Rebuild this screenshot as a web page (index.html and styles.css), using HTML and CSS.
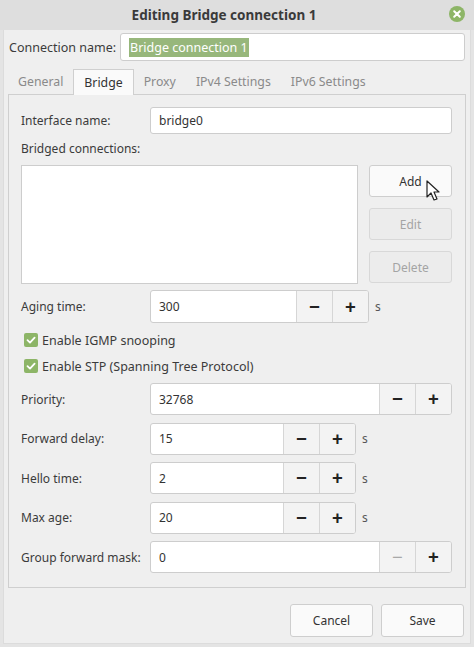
FILE: index.html
```html
<!DOCTYPE html>
<html>
<head>
<meta charset="utf-8">
<link rel="stylesheet" href="styles.css">
</head>
<body>
<div class="window">
  <div class="titlebar">
    <div class="title">Editing Bridge connection 1</div>
    <div class="close">
      <svg width="16" height="16" viewBox="0 0 16 16"><circle cx="8" cy="8" r="8" fill="#8db567"/><path d="M5.2 5.2 L10.8 10.8 M10.8 5.2 L5.2 10.8" stroke="#fff" stroke-width="2" stroke-linecap="round"/></svg>
    </div>
  </div>
  <div class="content">
    <div class="conn-row">
      <span class="conn-label">Connection name:</span>
      <div class="entry conn-entry"><span class="sel">Bridge connection 1</span></div>
    </div>
    <div class="tabs">
      <div class="tab">General</div>
      <div class="tab active">Bridge</div>
      <div class="tab">Proxy</div>
      <div class="tab">IPv4 Settings</div>
      <div class="tab">IPv6 Settings</div>
    </div>
    <div class="panel">
      <div class="row">
        <span class="label">Interface name:</span>
        <div class="entry wide">bridge0</div>
      </div>
      <div class="section-label">Bridged connections:</div>
      <div class="bridged">
        <div class="listbox"></div>
        <div class="side-buttons">
          <div class="btn add">Add
            <svg class="cursor" width="16" height="22" viewBox="0 0 16 22"><path d="M1 1 L1 17 L5 13 L8 20 L11 19 L8 12 L13 12 Z" fill="#fff" stroke="#222" stroke-width="1.2" stroke-linejoin="round"/></svg>
          </div>
          <div class="btn disabled">Edit</div>
          <div class="btn disabled">Delete</div>
        </div>
      </div>
      <div class="row spin-row aging">
        <span class="label">Aging time:</span>
        <div class="spin w218"><div class="spin-val">300</div><div class="sb">&#8722;</div><div class="sb">+</div></div>
        <span class="unit">s</span>
      </div>
      <div class="check-row first-check"><span class="check"><svg width="14" height="14" viewBox="0 0 14 14"><rect width="14" height="14" rx="2" fill="#8db567"/><path d="M3.5 7.2 L6 9.6 L10.6 4.6" fill="none" stroke="#fff" stroke-width="1.8" stroke-linecap="round" stroke-linejoin="round"/></svg></span>Enable IGMP snooping</div>
      <div class="check-row"><span class="check"><svg width="14" height="14" viewBox="0 0 14 14"><rect width="14" height="14" rx="2" fill="#8db567"/><path d="M3.5 7.2 L6 9.6 L10.6 4.6" fill="none" stroke="#fff" stroke-width="1.8" stroke-linecap="round" stroke-linejoin="round"/></svg></span>Enable STP (Spanning Tree Protocol)</div>
      <div class="row spin-row first">
        <span class="label">Priority:</span>
        <div class="spin full"><div class="spin-val">32768</div><div class="sb">&#8722;</div><div class="sb">+</div></div>
      </div>
      <div class="row spin-row">
        <span class="label">Forward delay:</span>
        <div class="spin w205"><div class="spin-val">15</div><div class="sb">&#8722;</div><div class="sb">+</div></div>
        <span class="unit">s</span>
      </div>
      <div class="row spin-row">
        <span class="label">Hello time:</span>
        <div class="spin w205"><div class="spin-val">2</div><div class="sb">&#8722;</div><div class="sb">+</div></div>
        <span class="unit">s</span>
      </div>
      <div class="row spin-row">
        <span class="label">Max age:</span>
        <div class="spin w205"><div class="spin-val">20</div><div class="sb">&#8722;</div><div class="sb">+</div></div>
        <span class="unit">s</span>
      </div>
      <div class="row spin-row">
        <span class="label">Group forward mask:</span>
        <div class="spin full"><div class="spin-val">0</div><div class="sb dim">&#8722;</div><div class="sb">+</div></div>
      </div>
    </div>
    <div class="footer">
      <div class="btn fbtn">Cancel</div>
      <div class="btn fbtn">Save</div>
    </div>
  </div>
</div>
</body>
</html>
```
FILE: styles.css
```css
* { box-sizing: border-box; }
html, body { margin: 0; padding: 0; }
body {
  width: 474px;
  height: 647px;
  background: #e4e4e4;
  font-family: "Noto Sans", "DejaVu Sans", sans-serif;
  font-size: 12px;
  color: #3b3b3b;
  overflow: hidden;
}
.window {
  width: 474px;
  height: 647px;
  display: flex;
  flex-direction: column;
}
.titlebar {
  height: 30px;
  display: flex;
  align-items: center;
  position: relative;
  background: #dedede;
}
.title {
  flex: 1;
  text-align: center;
  font-weight: bold;
  font-size: 13.5px;
  color: #3a3a3a;
  padding-right: 26px;
}
.close {
  position: absolute;
  right: 9px;
  top: 6px;
  width: 16px;
  height: 16px;
}
.close svg { display: block; }
.content {
  flex: 1;
  margin: 0 3px 3px 3px;
  background: #efefef;
  border: 1px solid #dcdcdc;
  border-top: none;
  padding: 2px 4px 0 4px;
  display: flex;
  flex-direction: column;
}
.conn-row {
  display: flex;
  align-items: center;
  height: 28px;
  margin-top: 1px;
}
.conn-label {
  width: 112px;
  padding-left: 1px;
  font-size: 12.5px;
}
.entry {
  background: #fff;
  border: 1px solid #cdcdcd;
  border-radius: 3px;
  display: flex;
  align-items: center;
  padding-left: 8px;
  color: #333;
}
.conn-entry {
  flex: 1;
  height: 28px;
  margin-right: 1px;
}
.sel {
  background: #97b77b;
  color: #fff;
  padding: 1px 1px;
  font-size: 12.5px;
}
.tabs {
  display: flex;
  height: 25px;
  margin-top: 8px;
  padding-left: 0;
  align-items: flex-end;
}
.tab {
  height: 25px;
  display: flex;
  align-items: center;
  padding: 0 10px;
  color: #8a8a8a;
  font-size: 12.3px;
}
.tab.active {
  background: #fafafa;
  border: 1px solid #cfcfcf;
  border-bottom: none;
  color: #333;
  height: 26px;
  margin-bottom: -1px;
  position: relative;
  z-index: 1;
  padding: 0 10px;
}
.panel {
  border: 1px solid #cfcfcf;
  background: #efefef;
  padding: 12px 13px 0 12px;
  height: 494px;
  display: flex;
  flex-direction: column;
}
.row {
  display: flex;
  align-items: center;
}
.label {
  width: 129px;
  flex-shrink: 0;
}
.entry.wide {
  flex: 1;
  height: 27px;
}
.section-label {
  margin-top: 7px;
  height: 16px;
  line-height: 16px;
}
.bridged {
  display: flex;
  margin-top: 8px;
  gap: 11px;
}
.listbox {
  width: 337px;
  height: 119px;
  background: #fff;
  border: 1px solid #cdcdcd;
}
.side-buttons {
  flex: 1;
  display: flex;
  flex-direction: column;
  gap: 11px;
}
.btn {
  height: 32px;
  border: 1px solid #cecece;
  border-radius: 3px;
  background: #fafafa;
  display: flex;
  align-items: center;
  justify-content: center;
  color: #333;
  position: relative;
}
.btn.disabled {
  background: #ececec;
  color: #a4a4a4;
  border-color: #d8d8d8;
}
.cursor {
  position: absolute;
  left: 56px;
  top: 14px;
}
.spin-row {
  margin-top: 7.5px;
  height: 32px;
}
.spin-row.aging { margin-top: 6px; height: 33px; }
.spin-row.first { margin-top: 4px; }
.spin {
  display: flex;
  height: 100%;
  border: 1px solid #cdcdcd;
  border-radius: 3px;
  background: #fff;
  overflow: hidden;
}
.spin.w218 { width: 219px; }
.spin.w205 { width: 206px; }
.spin.full { flex: 1; }
.spin-val {
  flex: 1;
  display: flex;
  align-items: center;
  padding-left: 8px;
  color: #333;
}
.sb {
  width: 36px;
  border-left: 1px solid #d6d6d6;
  background: #f3f3f3;
  display: flex;
  align-items: center;
  justify-content: center;
  font-size: 19px;
  font-weight: bold;
  color: #222;
}
.sb.dim { color: #a8a8a8; font-weight: normal; }
.unit {
  margin-left: 6px;
  color: #555;
}
.check-row {
  display: flex;
  align-items: center;
  height: 26px;
  padding-left: 3px;
  font-size: 12.5px;
}
.check-row.first-check { margin-top: 4px; }
.check {
  width: 14px;
  height: 14px;
  margin-right: 4px;
}
.check svg { display: block; }
.footer {
  display: flex;
  justify-content: flex-end;
  gap: 8px;
  margin-top: 16px;
  padding-right: 2px;
}
.fbtn {
  width: 83px;
  height: 33px;
}
```
